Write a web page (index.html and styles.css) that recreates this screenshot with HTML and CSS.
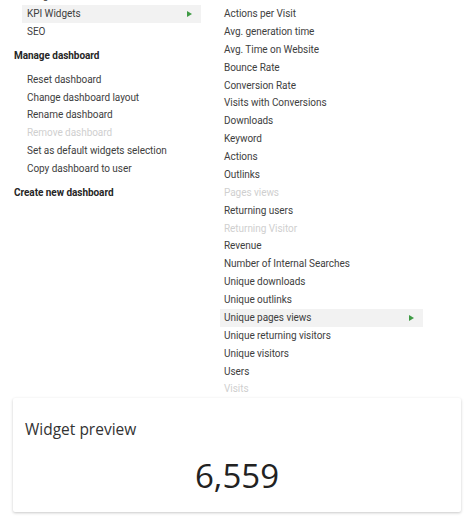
FILE: index.html
```html
<!DOCTYPE html>
<html lang="en">
<head>
    <meta charset="UTF-8">
    <meta name="viewport" content="width=device-width, initial-scale=1.0">
    <title>Dashboard widgets</title>
    <link rel="stylesheet" href="styles.css">
</head>
<body>
    <div class="widget-menu">
        <ul class="categories">
            <li class="sub-item">Insights</li>
            <li class="sub-item active">KPI Widgets <span class="arrow"></span></li>
            <li class="sub-item">SEO</li>
            <li class="menu-header">Manage dashboard</li>
            <li class="sub-item">Reset dashboard</li>
            <li class="sub-item">Change dashboard layout</li>
            <li class="sub-item">Rename dashboard</li>
            <li class="sub-item disabled">Remove dashboard</li>
            <li class="sub-item">Set as default widgets selection</li>
            <li class="sub-item">Copy dashboard to user</li>
            <li class="menu-header">Create new dashboard</li>
        </ul>
        <ul class="widget-list">
            <li>Actions per Visit</li>
            <li>Avg. generation time</li>
            <li>Avg. Time on Website</li>
            <li>Bounce Rate</li>
            <li>Conversion Rate</li>
            <li>Visits with Conversions</li>
            <li>Downloads</li>
            <li>Keyword</li>
            <li>Actions</li>
            <li>Outlinks</li>
            <li class="disabled">Pages views</li>
            <li>Returning users</li>
            <li class="disabled">Returning Visitor</li>
            <li>Revenue</li>
            <li>Number of Internal Searches</li>
            <li>Unique downloads</li>
            <li>Unique outlinks</li>
            <li class="active">Unique pages views <span class="arrow"></span></li>
            <li>Unique returning visitors</li>
            <li>Unique visitors</li>
            <li>Users</li>
            <li class="disabled">Visits</li>
        </ul>
    </div>

    <div class="preview-card">
        <div class="preview-title">Widget preview</div>
        <div class="preview-value">6,559</div>
    </div>
</body>
</html>
```

FILE: styles.css
```css
html, body {
    margin: 0;
    height: 100%;
}

body {
    font-family: 'Roboto', 'Open Sans', sans-serif;
    font-size: 10px;
    letter-spacing: -0.05px;
    color: #3e3e3e;
    background-color: #ffffff;
    overflow: hidden;
}

ul {
    list-style: none;
    margin: 0;
    padding: 0;
}

.widget-menu {
    display: flex;
    align-items: flex-start;
    padding-left: 13px;
}

.categories {
    width: 188px;
    margin-top: -12.875px;
}

.categories li,
.widget-list li {
    box-sizing: border-box;
    height: 17.875px;
    line-height: 16.875px;
    padding-top: 1px;
    white-space: nowrap;
}

.sub-item {
    display: flex;
    justify-content: space-between;
    align-items: center;
    margin-left: 9px;
    padding: 0 9px 0 5px;
}

.menu-header {
    font-weight: bold;
    color: #262626;
    margin: 6px 0;
    padding-left: 1px;
}

.widget-list {
    width: 203px;
    margin-left: 19px;
    margin-top: 5px;
}

.widget-list li {
    display: flex;
    justify-content: space-between;
    align-items: center;
    padding-left: 4px;
    padding-right: 9px;
}

.active {
    background-color: #f2f2f2;
}

.disabled {
    color: #cfcfcf;
}

.arrow {
    width: 0;
    height: 0;
    border-top: 3.5px solid transparent;
    border-bottom: 3.5px solid transparent;
    border-left: 5px solid #3f9b45;
}

.preview-card {
    margin: 0 13px;
    height: 114px;
    box-sizing: border-box;
    padding: 20px 12px 0 12px;
    background-color: #ffffff;
    box-shadow: 0 1px 3px rgba(0, 0, 0, 0.22);
    border-radius: 2px;
    letter-spacing: 0;
}

.preview-title {
    font-family: 'Open Sans', sans-serif;
    font-size: 15.5px;
    color: #333333;
    line-height: 22px;
}

.preview-value {
    font-family: 'Open Sans', sans-serif;
    font-size: 33px;
    color: #222222;
    text-align: center;
    line-height: 44px;
    margin-top: 14px;
}
```
